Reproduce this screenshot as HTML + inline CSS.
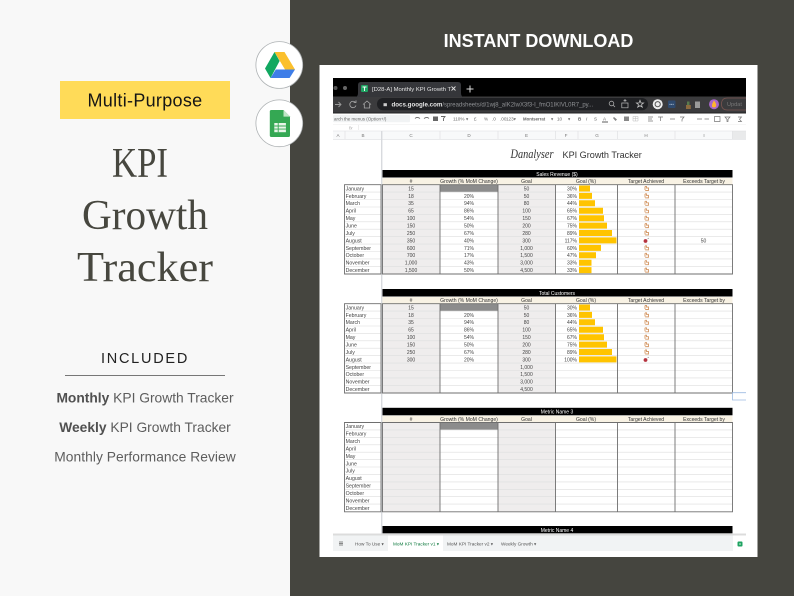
<!DOCTYPE html>
<html lang="en"><head><meta charset="utf-8"><title>KPI Growth Tracker</title>
<style>
html,body{margin:0;padding:0;width:794px;height:596px;overflow:hidden;background:#f8f8f8}
svg{position:absolute;left:0;top:0;display:block}
#soft{filter:blur(.25px)}
#sheet{filter:blur(.36px)}
text{font-family:"Liberation Sans",sans-serif}
.d text{font-size:5px;fill:#444;text-anchor:middle}
.m text{font-size:5.2px;fill:#444;text-anchor:start}
.r text{font-size:5px;fill:#444;text-anchor:end}
.h text{font-size:5.1px;fill:#333;text-anchor:middle}
.t text{font-size:4.6px;fill:#777;text-anchor:middle}
.s text{font-size:4.7px;fill:#555;text-anchor:start}
</style></head><body>
<svg id="soft" width="794" height="596" viewBox="0 0 794 596" xmlns="http://www.w3.org/2000/svg">
<rect width="794" height="596" fill="#f8f8f8"/>
<rect x="290" width="504" height="596" fill="#45453f"/>
<rect x="60" y="81" width="170" height="38" fill="#ffdb58"/>
<text x="145" y="106.5" text-anchor="middle" font-size="18" letter-spacing=".3" fill="#151515">Multi-Purpose</text>
<g font-size="42.5" fill="#47473f">
<text x="112" y="177" textLength="56" lengthAdjust="spacingAndGlyphs" style="font-family:'Liberation Serif',serif">KPI</text>
<text x="82" y="229" textLength="126" lengthAdjust="spacingAndGlyphs" style="font-family:'Liberation Serif',serif">Growth</text>
<text x="77" y="281" textLength="136" lengthAdjust="spacingAndGlyphs" style="font-family:'Liberation Serif',serif">Tracker</text>
</g>
<text x="145" y="363" text-anchor="middle" font-size="14.5" letter-spacing="1.75" fill="#222">INCLUDED</text>
<rect x="65" y="375" width="160" height="1" fill="#777"/>
<g font-size="13.8" fill="#5d5d5d" text-anchor="middle">
<text x="145" y="402.5"><tspan font-weight="700" fill="#505050">Monthly</tspan> KPI Growth Tracker</text>
<text x="145" y="432"><tspan font-weight="700" fill="#505050">Weekly</tspan> KPI Growth Tracker</text>
<text x="145" y="461.5" letter-spacing=".05">Monthly Performance Review</text>
</g>
<text x="538.5" y="46.8" text-anchor="middle" font-size="18" font-weight="700" fill="#fff">INSTANT DOWNLOAD</text>
<circle cx="279.3" cy="65" r="23.4" fill="#fff" stroke="#aeb2b4" stroke-width=".8"/>
<circle cx="279.3" cy="123.3" r="23.4" fill="#fff" stroke="#aeb2b4" stroke-width=".8"/>
<path d="M274.5 52L284.5 52L295 69.5L285 69.5Z" fill="#fbc02d"/>
<path d="M274.5 52L279.6 61L270.5 78L265 68.5Z" fill="#11a861"/>
<path d="M270.5 78L275.8 69.5L295 69.5L289.6 78Z" fill="#3f7ee8"/>
<path d="M271.4 110H283.5L290 116.6V135.4Q290 137 288.4 137H271.4Q269.8 137 269.8 135.4V111.6Q269.8 110 271.4 110Z" fill="#34a853"/>
<path d="M283.5 110L290 116.6H283.5Z" fill="#bfe5c5"/>
<rect x="274.3" y="123" width="11.6" height="9.2" fill="#e8f5e9"/>
<path d="M274.3 126H285.9M274.3 129.1H285.9M278.2 123V132.2" stroke="#34a853" stroke-width=".9"/>
</svg>
<svg id="sheet" width="794" height="596" viewBox="0 0 794 596" xmlns="http://www.w3.org/2000/svg">
<rect x="319.5" y="65" width="438" height="492" fill="#fff"/>
<!-- browser chrome -->
<rect x="333" y="78" width="413" height="19" fill="#000"/>
<rect x="333" y="96.5" width="413" height="16" fill="#3b3b3d"/>
<circle cx="335.5" cy="88" r="2" fill="#555"/><circle cx="345" cy="88" r="2" fill="#666"/>
<path d="M356 97Q358 96 358 93V85Q358 82 361 82H458Q461 82 461 85V93Q461 96 463 97Z" fill="#35363a"/>
<rect x="361" y="85" width="7" height="7" rx="1" fill="#1ea362"/>
<path d="M362.5 87H366.5M364.5 87V91" stroke="#fff" stroke-width=".9"/>
<text x="372" y="91" font-size="5.9" fill="#e2e2e2">[D28-A] Monthly KPI Growth T</text>
<path d="M451.5 86.5L455.5 90.5M455.5 86.5L451.5 90.5" stroke="#ddd" stroke-width=".9"/>
<path d="M470 85.5V92.5M466.5 89H473.5" stroke="#ddd" stroke-width="1"/>
<path d="M335 104.5H341M338.5 102L341 104.5L338.5 107" stroke="#999" stroke-width=".9" fill="none"/>
<path d="M355.5 102.5A3.2 3.2 0 1 0 356 105.5M353.6 102.5H356V100.4" stroke="#aaa" stroke-width=".8" fill="none"/>
<path d="M363 104.5L367 101L371 104.5M364.3 104V108H369.7V104" stroke="#aaa" stroke-width=".8" fill="none"/>
<rect x="377" y="98" width="271" height="12.2" rx="6" fill="#1f2023"/>
<rect x="383.5" y="103.2" width="3.4" height="3" fill="#ccc"/>
<text x="391.5" y="106.5" font-size="6.2" font-weight="700" fill="#e6e6e6">docs.google.com<tspan fill="#8f9194" font-weight="400" font-size="5.95">/spreadsheets/d/1wj8_aIK2IwX3f3-I_fmO1IKIVL0R7_py...</tspan></text>
<circle cx="611.5" cy="103.5" r="2.3" fill="none" stroke="#aaa" stroke-width=".8"/><path d="M613.3 105.3L615 107" stroke="#aaa" stroke-width=".8"/>
<path d="M624 103H621.8V107.8H628V103H626M625 104V99.8M623.6 101L625 99.6L626.4 101" stroke="#bbb" stroke-width=".7" fill="none"/>
<path d="M640 100.3L641 103H643.6L641.5 104.6L642.3 107.2L640 105.6L637.7 107.2L638.5 104.6L636.4 103H639Z" fill="none" stroke="#ccc" stroke-width=".7"/>
<circle cx="657.7" cy="104.2" r="5" fill="#eee"/><circle cx="657.7" cy="104.2" r="2.6" fill="none" stroke="#555" stroke-width="1"/>
<rect x="668" y="100.5" width="7.5" height="7.5" rx="1" fill="#2f4a6e"/><path d="M669.5 104.3H674" stroke="#bcd" stroke-width=".8" stroke-dasharray="1 .6"/>
<rect x="686" y="105" width="4.8" height="4" fill="#8d6c3f"/><rect x="687" y="101.5" width="2.5" height="3.5" fill="#587a4d"/>
<path d="M695 101.5H700V108H695Z" fill="#9a9a9a"/>
<circle cx="714" cy="104.2" r="5" fill="#a765c9"/><path d="M714 100.5Q717 104 716 106.6Q714 108.4 712 106.6Q711.6 104 714 100.5Z" fill="#ffb52e"/>
<path d="M746 98H727.5Q721.5 98 721.5 104Q721.5 110 727.5 110H746" fill="none" stroke="#7b5550" stroke-width=".8"/>
<text x="727" y="106" font-size="5.6" fill="#777">Updat</text>
<rect x="333" y="112.5" width="413" height="1" fill="#222"/>
<!-- toolbar -->
<rect x="333" y="115" width="77" height="7.2" rx="1" fill="#f1f3f4"/>
<text x="334" y="120.4" font-size="4.5" fill="#666">arch the menus (Option+/)</text>
<g font-size="4.6" fill="#666">
<text x="453" y="120.3">110%</text><text x="466" y="120.3">▾</text><text x="474" y="120.3">£</text><text x="484" y="120.3">%</text><text x="492" y="120.3">.0</text><text x="500" y="120.3">.00</text><text x="506" y="120.3">123▾</text><text x="523" y="120.3" font-size="4.3" font-weight="700">Montserrat</text><text x="551" y="120.3">▾</text><text x="557" y="120.3">10</text><text x="568" y="120.3">▾</text>
<text x="578" y="120.3" font-weight="700">B</text><text x="586" y="120.3" font-style="italic">I</text><text x="594" y="120.3">S</text><text x="603" y="120.3">A</text>
</g>
<path d="M415 118.5Q417 116.3 420 118.5M424 118.5Q427 116.3 429 118.5" stroke="#666" stroke-width=".8" fill="none"/>
<rect x="433" y="116.5" width="5" height="4.5" fill="#666"/><path d="M441 116.5H445L443.5 118.5V121" stroke="#666" stroke-width=".9" fill="none"/>
<path d="M602 122H608" stroke="#333" stroke-width=".8"/>
<path d="M614 117L617 119.5L615.5 121L613 118ZM624 116.5H629V121H624Z" fill="#888"/>
<path d="M633 116.5H638V121H633ZM635.5 116.5V121M633 118.7H638" stroke="#bbb" stroke-width=".5" fill="none"/>
<path d="M648 117H653M648 119H652M648 121H653M658 117H663M660.5 117V121M670 119H675M680 117H684L682 119.5V121.5M697 119H702M704.5 119H709M714.5 116.5H720V121.5H714.5ZM725 117L730 117L728 119.4V121.5H727V119.4ZM738 117H741.5L739.5 119.3L741.5 121.5H738" stroke="#777" stroke-width=".7" fill="none"/>
<!-- formula -->
<rect x="333" y="124" width="413" height=".5" fill="#ececec"/>
<text x="349" y="129.5" font-size="4.5" font-style="italic" fill="#aaa">fx</text><rect x="358" y="125" width=".5" height="5" fill="#ddd"/>
<!-- col header -->
<rect x="333" y="131" width="413" height="8.3" fill="#f8f9fa"/>
<rect x="732.5" y="131" width="13.5" height="8.3" fill="#e9eaeb"/>
<path d="M333 131H746M333 139.3H746M345 131V139.3M440 131V139.3M498 131V139.3M555.5 131V139.3M578 131V139.3M617.5 131V139.3M675 131V139.3M732.5 131V139.3" stroke="#dcdde0" stroke-width=".6" fill="none"/>
<g class="t"><text x="338" y="137">A</text><text x="363" y="137">B</text><text x="411" y="137">C</text><text x="469" y="137">D</text><text x="526.5" y="137">E</text><text x="566" y="137">F</text><text x="597" y="137">G</text><text x="646" y="137">H</text><text x="704" y="137">I</text></g>
<rect x="381" y="131" width="1.4" height="404" fill="#d8dade"/>
<!-- title -->
<text x="510.5" y="158" font-size="13" font-style="italic" fill="#333" textLength="43" lengthAdjust="spacingAndGlyphs" style="font-family:'Liberation Serif',serif">Danalyser</text>
<text x="562.5" y="158" font-size="9.1" fill="#333">KPI Growth Tracker</text>

<!-- TABLE 1 -->
<g>
<rect x="382.5" y="170" width="350" height="7.5" fill="#000"/><rect x="382.5" y="178" width="350" height="7" fill="#f8f2e4"/>
<rect x="382.5" y="184.7" width="57.5" height="89.3" fill="#efeded"/><rect x="498" y="184.7" width="57.5" height="89.3" fill="#efeded"/><rect x="440" y="184.7" width="58" height="7.4" fill="#8c8c8c"/>
<path d="M345 192.1H732M345 199.5H732M345 207H732M345 214.4H732M345 221.8H732M345 229.2H732M345 236.6H732M345 244.1H732M345 251.5H732M345 258.9H732M345 266.3H732" stroke="#dedede" stroke-width=".6"/>
<path d="M579 185.5h11v6h-11zM579 192.9h13v6h-13zM579 200.3h16v6h-16zM579 207.8h24v6h-24zM579 215.2h25v6h-25zM579 222.6h28v6h-28zM579 230h33v6h-33zM579 237.4h37.5v6h-37.5zM579 244.9h22v6h-22zM579 252.3h17v6h-17zM579 259.7h12.5v6h-12.5zM579 267.1h12.5v6h-12.5z" fill="#ffc400"/>
<path d="M344.5 184.7H381V274H344.5ZM382.5 184.7H732.5V274H382.5ZM440 184.7V274M498 184.7V274M555.5 184.7V274M617.5 184.7V274M675 184.7V274" fill="none" stroke="#6f6f6f" stroke-width=".9"/>
<path d="M645 186.5V190M645 186.5H646.5V188H648.5V190.5H645.2M645 193.9V197.4M645 193.9H646.5V195.4H648.5V197.9H645.2M645 201.3V204.8M645 201.3H646.5V202.8H648.5V205.3H645.2M645 208.8V212.3M645 208.8H646.5V210.3H648.5V212.8H645.2M645 216.2V219.7M645 216.2H646.5V217.7H648.5V220.2H645.2M645 223.6V227.1M645 223.6H646.5V225.1H648.5V227.6H645.2M645 231V234.5M645 231H646.5V232.5H648.5V235H645.2M645 245.9V249.4M645 245.9H646.5V247.4H648.5V249.9H645.2M645 253.3V256.8M645 253.3H646.5V254.8H648.5V257.3H645.2M645 260.7V264.2M645 260.7H646.5V262.2H648.5V264.7H645.2M645 268.1V271.6M645 268.1H646.5V269.6H648.5V272.1H645.2" fill="none" stroke="#d69c6c" stroke-width=".95"/>
<circle cx="645.5" cy="241" r="1.9" fill="#b5333f"/><path d="M647.5 239L649 238" stroke="#888" stroke-width=".6"/>
<text x="557" y="175.8" font-size="5" fill="#fff" text-anchor="middle">Sales Revenue ($)</text>
<g class="h"><text x="411" y="183.2">#</text><text x="469" y="183.2">Growth (% MoM Change)</text><text x="526.5" y="183.2">Goal</text><text x="586" y="183.2">Goal (%)</text><text x="646" y="183.2">Target Achieved</text><text x="704" y="183.2">Exceeds Target by</text></g>
<g class="m"><text x="345.6" y="190.4">January</text><text x="345.6" y="197.8">February</text><text x="345.6" y="205.2">March</text><text x="345.6" y="212.7">April</text><text x="345.6" y="220.1">May</text><text x="345.6" y="227.5">June</text><text x="345.6" y="234.9">July</text><text x="345.6" y="242.4">August</text><text x="345.6" y="249.8">September</text><text x="345.6" y="257.2">October</text><text x="345.6" y="264.6">November</text><text x="345.6" y="272">December</text></g>
<g class="d"><text x="411" y="190.4">15</text><text x="411" y="197.8">18</text><text x="411" y="205.2">35</text><text x="411" y="212.7">65</text><text x="411" y="220.1">100</text><text x="411" y="227.5">150</text><text x="411" y="234.9">250</text><text x="411" y="242.4">350</text><text x="411" y="249.8">600</text><text x="411" y="257.2">700</text><text x="411" y="264.6">1,000</text><text x="411" y="272">1,500</text>
<text x="469" y="197.8">20%</text><text x="469" y="205.2">94%</text><text x="469" y="212.7">86%</text><text x="469" y="220.1">54%</text><text x="469" y="227.5">50%</text><text x="469" y="234.9">67%</text><text x="469" y="242.4">40%</text><text x="469" y="249.8">71%</text><text x="469" y="257.2">17%</text><text x="469" y="264.6">43%</text><text x="469" y="272">50%</text>
<text x="526.5" y="190.4">50</text><text x="526.5" y="197.8">50</text><text x="526.5" y="205.2">80</text><text x="526.5" y="212.7">100</text><text x="526.5" y="220.1">150</text><text x="526.5" y="227.5">200</text><text x="526.5" y="234.9">280</text><text x="526.5" y="242.4">300</text><text x="526.5" y="249.8">1,000</text><text x="526.5" y="257.2">1,500</text><text x="526.5" y="264.6">3,000</text><text x="526.5" y="272">4,500</text>
<text x="703.5" y="242.4">50</text></g>
<g class="r"><text x="577" y="190.4">30%</text><text x="577" y="197.8">36%</text><text x="577" y="205.2">44%</text><text x="577" y="212.7">65%</text><text x="577" y="220.1">67%</text><text x="577" y="227.5">75%</text><text x="577" y="234.9">89%</text><text x="577" y="242.4">117%</text><text x="577" y="249.8">60%</text><text x="577" y="257.2">47%</text><text x="577" y="264.6">33%</text><text x="577" y="272">33%</text></g>
</g>

<!-- TABLE 2 -->
<g transform="translate(0,119)">
<rect x="382.5" y="170" width="350" height="7.5" fill="#000"/><rect x="382.5" y="178" width="350" height="7" fill="#f8f2e4"/>
<rect x="382.5" y="184.7" width="57.5" height="89.3" fill="#efeded"/><rect x="498" y="184.7" width="57.5" height="89.3" fill="#efeded"/><rect x="440" y="184.7" width="58" height="7.4" fill="#8c8c8c"/>
<path d="M345 192.1H732M345 199.5H732M345 207H732M345 214.4H732M345 221.8H732M345 229.2H732M345 236.6H732M345 244.1H732M345 251.5H732M345 258.9H732M345 266.3H732" stroke="#dedede" stroke-width=".6"/>
<path d="M579 185.5h11v6h-11zM579 192.9h13v6h-13zM579 200.3h16v6h-16zM579 207.8h24v6h-24zM579 215.2h25v6h-25zM579 222.6h28v6h-28zM579 230h33v6h-33zM579 237.4h37.5v6h-37.5z" fill="#ffc400"/>
<path d="M344.5 184.7H381V274H344.5ZM382.5 184.7H732.5V274H382.5ZM440 184.7V274M498 184.7V274M555.5 184.7V274M617.5 184.7V274M675 184.7V274" fill="none" stroke="#6f6f6f" stroke-width=".9"/>
<path d="M645 186.5V190M645 186.5H646.5V188H648.5V190.5H645.2M645 193.9V197.4M645 193.9H646.5V195.4H648.5V197.9H645.2M645 201.3V204.8M645 201.3H646.5V202.8H648.5V205.3H645.2M645 208.8V212.3M645 208.8H646.5V210.3H648.5V212.8H645.2M645 216.2V219.7M645 216.2H646.5V217.7H648.5V220.2H645.2M645 223.6V227.1M645 223.6H646.5V225.1H648.5V227.6H645.2M645 231V234.5M645 231H646.5V232.5H648.5V235H645.2" fill="none" stroke="#d69c6c" stroke-width=".95"/>
<circle cx="645.5" cy="241" r="1.9" fill="#b5333f"/><path d="M647.5 239L649 238" stroke="#888" stroke-width=".6"/>
<text x="557" y="175.8" font-size="5" fill="#fff" text-anchor="middle">Total Customers</text>
<g class="h"><text x="411" y="183.2">#</text><text x="469" y="183.2">Growth (% MoM Change)</text><text x="526.5" y="183.2">Goal</text><text x="586" y="183.2">Goal (%)</text><text x="646" y="183.2">Target Achieved</text><text x="704" y="183.2">Exceeds Target by</text></g>
<g class="m"><text x="345.6" y="190.4">January</text><text x="345.6" y="197.8">February</text><text x="345.6" y="205.2">March</text><text x="345.6" y="212.7">April</text><text x="345.6" y="220.1">May</text><text x="345.6" y="227.5">June</text><text x="345.6" y="234.9">July</text><text x="345.6" y="242.4">August</text><text x="345.6" y="249.8">September</text><text x="345.6" y="257.2">October</text><text x="345.6" y="264.6">November</text><text x="345.6" y="272">December</text></g>
<g class="d"><text x="411" y="190.4">15</text><text x="411" y="197.8">18</text><text x="411" y="205.2">35</text><text x="411" y="212.7">65</text><text x="411" y="220.1">100</text><text x="411" y="227.5">150</text><text x="411" y="234.9">250</text><text x="411" y="242.4">300</text>
<text x="469" y="197.8">20%</text><text x="469" y="205.2">94%</text><text x="469" y="212.7">86%</text><text x="469" y="220.1">54%</text><text x="469" y="227.5">50%</text><text x="469" y="234.9">67%</text><text x="469" y="242.4">20%</text>
<text x="526.5" y="190.4">50</text><text x="526.5" y="197.8">50</text><text x="526.5" y="205.2">80</text><text x="526.5" y="212.7">100</text><text x="526.5" y="220.1">150</text><text x="526.5" y="227.5">200</text><text x="526.5" y="234.9">280</text><text x="526.5" y="242.4">300</text><text x="526.5" y="249.8">1,000</text><text x="526.5" y="257.2">1,500</text><text x="526.5" y="264.6">3,000</text><text x="526.5" y="272">4,500</text></g>
<g class="r"><text x="577" y="190.4">30%</text><text x="577" y="197.8">36%</text><text x="577" y="205.2">44%</text><text x="577" y="212.7">65%</text><text x="577" y="220.1">67%</text><text x="577" y="227.5">75%</text><text x="577" y="234.9">89%</text><text x="577" y="242.4">100%</text></g>
</g>
<path d="M746 392.7H732.5V400H746" fill="none" stroke="#9dbbe2" stroke-width=".8"/>

<!-- TABLE 3 -->
<g transform="translate(0,237.8)">
<rect x="382.5" y="170" width="350" height="7.5" fill="#000"/><rect x="382.5" y="178" width="350" height="7" fill="#f8f2e4"/>
<rect x="382.5" y="184.7" width="57.5" height="89.3" fill="#efeded"/><rect x="498" y="184.7" width="57.5" height="89.3" fill="#efeded"/><rect x="440" y="184.7" width="58" height="7.4" fill="#8c8c8c"/>
<path d="M345 192.1H732M345 199.5H732M345 207H732M345 214.4H732M345 221.8H732M345 229.2H732M345 236.6H732M345 244.1H732M345 251.5H732M345 258.9H732M345 266.3H732" stroke="#dedede" stroke-width=".6"/>
<path d="M344.5 184.7H381V274H344.5ZM382.5 184.7H732.5V274H382.5ZM440 184.7V274M498 184.7V274M555.5 184.7V274M617.5 184.7V274M675 184.7V274" fill="none" stroke="#6f6f6f" stroke-width=".9"/>
<text x="557" y="175.8" font-size="5" fill="#fff" text-anchor="middle">Metric Name 3</text>
<g class="h"><text x="411" y="183.2">#</text><text x="469" y="183.2">Growth (% MoM Change)</text><text x="526.5" y="183.2">Goal</text><text x="586" y="183.2">Goal (%)</text><text x="646" y="183.2">Target Achieved</text><text x="704" y="183.2">Exceeds Target by</text></g>
<g class="m"><text x="345.6" y="190.4">January</text><text x="345.6" y="197.8">February</text><text x="345.6" y="205.2">March</text><text x="345.6" y="212.7">April</text><text x="345.6" y="220.1">May</text><text x="345.6" y="227.5">June</text><text x="345.6" y="234.9">July</text><text x="345.6" y="242.4">August</text><text x="345.6" y="249.8">September</text><text x="345.6" y="257.2">October</text><text x="345.6" y="264.6">November</text><text x="345.6" y="272">December</text></g>
</g>

<!-- TABLE 4 bar -->
<rect x="382.5" y="526" width="350" height="7.3" fill="#000"/>
<text x="557" y="531.8" font-size="5" fill="#fff" text-anchor="middle">Metric Name 4</text>

<!-- bottom tabs -->
<rect x="333" y="533.5" width="413" height="2" fill="#dcdcdc"/>
<rect x="333" y="535.5" width="400" height="15.5" fill="#f1f3f4"/>
<rect x="388" y="535.5" width="55" height="16" fill="#fff"/>
<path d="M339 542H343M339 543.5H343M339 545H343" stroke="#666" stroke-width=".7"/>
<g class="s"><text x="355" y="545.7">How To Use  ▾</text><text x="447" y="545.7">MoM KPI Tracker v2  ▾</text><text x="501" y="545.7">Weekly Growth  ▾</text></g>
<text x="393" y="545.7" font-size="4.7" fill="#0f7a3f">MoM KPI Tracker v1  ▾</text>
<rect x="737.5" y="541.5" width="5" height="5" rx="1" fill="#1ea362"/>
<path d="M739 544H741M740 543V545" stroke="#d6f0de" stroke-width=".6"/>
</svg>
</body></html>
